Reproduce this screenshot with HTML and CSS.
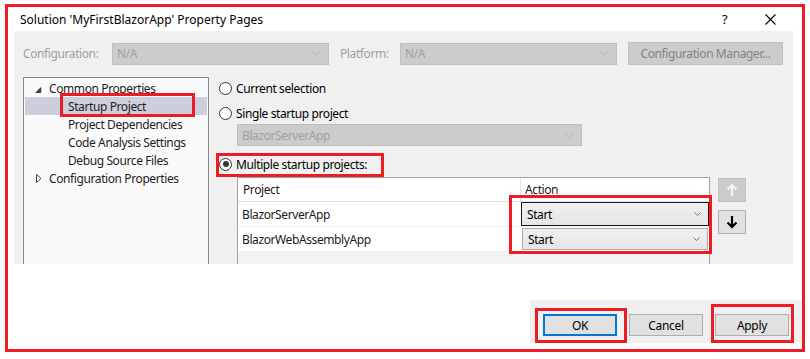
FILE: index.html
```html
<!DOCTYPE html>
<html>
<head>
<meta charset="utf-8">
<link rel="stylesheet" href="styles.css">
</head>
<body>
<div class="frame">
  <div class="titlebar">
    <span class="title">Solution 'MyFirstBlazorApp' Property Pages</span>
    <span class="help">?</span>
    <svg class="close" width="11" height="11" viewBox="0 0 11 11"><path d="M0.5 0.5L10.5 10.5M10.5 0.5L0.5 10.5" stroke="#000" stroke-width="1.1" fill="none"/></svg>
  </div>
  <div class="body">
    <div class="config-row">
      <span class="lbl lbl-config">Configuration:</span>
      <div class="combo disabled cfg">
        <span>N/A</span>
        <svg class="chev" width="9" height="5" viewBox="0 0 9 5"><path d="M0.5 0.5L4.5 4.5L8.5 0.5" stroke="#b0b0b0" fill="none"/></svg>
      </div>
      <span class="lbl lbl-platform">Platform:</span>
      <div class="combo disabled cfg">
        <span>N/A</span>
        <svg class="chev" width="9" height="5" viewBox="0 0 9 5"><path d="M0.5 0.5L4.5 4.5L8.5 0.5" stroke="#b0b0b0" fill="none"/></svg>
      </div>
      <div class="cm-btn">Configuration Manager...</div>
    </div>
    <div class="main">
      <div class="tree">
        <div class="node"><span class="tri">&#9698;</span><span>Common Properties</span></div>
        <div class="node child selected"><span>Startup Project</span></div>
        <div class="node child"><span>Project Dependencies</span></div>
        <div class="node child"><span>Code Analysis Settings</span></div>
        <div class="node child"><span>Debug Source Files</span></div>
        <div class="node"><svg class="tri-open" width="6" height="9" viewBox="0 0 6 9"><path d="M0.5 0.5L5 4.5L0.5 8.5Z" stroke="#444" fill="none"/></svg><span>Configuration Properties</span></div>
      </div>
      <div class="panel">
        <div class="radio-row r1"><span class="radio"></span><span>Current selection</span></div>
        <div class="radio-row r2"><span class="radio"></span><span>Single startup project</span></div>
        <div class="combo disabled single">
          <span>BlazorServerApp</span>
          <svg class="chev" width="9" height="5" viewBox="0 0 9 5"><path d="M0.5 0.5L4.5 4.5L8.5 0.5" stroke="#b0b0b0" fill="none"/></svg>
        </div>
        <div class="radio-row r3"><span class="radio checked"></span><span>Multiple startup projects:</span></div>
        <div class="grid-area">
          <div class="table">
            <div class="trow head"><div class="c1">Project</div><div class="c2">Action</div></div>
            <div class="trow"><div class="c1">BlazorServerApp</div><div class="c2"><div class="dd focus"><span>Start</span><svg class="chev" width="7" height="4" viewBox="0 0 7 4"><path d="M0.5 0.5L3.5 3.5L6.5 0.5" stroke="#707070" fill="none"/></svg></div></div></div>
            <div class="trow"><div class="c1">BlazorWebAssemblyApp</div><div class="c2"><div class="dd second"><span>Start</span><svg class="chev" width="7" height="4" viewBox="0 0 7 4"><path d="M0.5 0.5L3.5 3.5L6.5 0.5" stroke="#707070" fill="none"/></svg></div></div></div>
          </div>
          <div class="movers">
            <div class="mv up"><svg width="12" height="14" viewBox="0 0 12 14"><path d="M6 13V2M1.5 6.5L6 2L10.5 6.5" stroke="#f4f4f4" stroke-width="2.2" fill="none"/></svg></div>
            <div class="mv down"><svg width="12" height="14" viewBox="0 0 12 14"><path d="M6 1V12M1.5 7.5L6 12L10.5 7.5" stroke="#000" stroke-width="2.2" fill="none"/></svg></div>
          </div>
        </div>
      </div>
    </div>
  </div>
  <div class="footer">
    <div class="btn ok">OK</div>
    <div class="btn">Cancel</div>
    <div class="btn">Apply</div>
  </div>
  <div class="mark m-startup"></div>
  <div class="mark m-multi"></div>
  <div class="mark m-action"></div>
  <div class="mark m-ok"></div>
  <div class="mark m-apply"></div>
</div>
</body>
</html>
```

FILE: styles.css
```css
* { box-sizing: border-box; }
html, body { margin: 0; padding: 0; background: #fff; }
body {
  font-family: "Noto Sans", "Open Sans", sans-serif;
  font-size: 12px;
  color: #1a1a1a;
  width: 810px;
  height: 359px;
  overflow: hidden;
}
.frame {
  position: relative;
  margin: 4px 0 0 5px;
  width: 800px;
  height: 348px;
  border: 3px solid #ed1c24;
  background: #fff;
}
.titlebar {
  height: 24px;
  display: flex;
  align-items: center;
  padding-left: 12px;
}
.title { flex: 1; color: #000; }
.help { width: 8px; margin-right: 35px; color: #000; font-size: 13px; }
.close { margin-right: 26px; }

.body {
  margin-left: 6px;
  width: 779px;
  height: 233px;
  background: #f0f0f0;
  overflow: hidden;
  letter-spacing: -0.4px;
}
.config-row {
  display: flex;
  align-items: center;
  margin-top: 11px;
  height: 23px;
  padding-left: 9px;
}
.lbl { color: #a0a0a0; }
.lbl-config { width: 89px; }
.lbl-platform { width: 60px; margin-left: 11px; }
.combo {
  display: flex;
  align-items: center;
  justify-content: space-between;
  height: 22px;
  padding: 0 8px 0 4px;
  border: 1px solid #bfbfbf;
}
.combo.disabled { background: #cccccc; color: #a0a0a0; }
.cfg { width: 217px; }
.cm-btn {
  margin-left: 11px;
  width: 155px;
  height: 23px;
  border: 1px solid #bfbfbf;
  background: #cccccc;
  color: #838383;
  display: flex;
  align-items: center;
  justify-content: center;
}

.main {
  display: flex;
  margin-top: 12px;
  padding-left: 9px;
}
.tree {
  width: 186px;
  height: 220px;
  border: 1px solid #828790;
  background: #fafafa;
  padding-top: 1px;
  flex: none;
}
.node {
  height: 18px;
  display: flex;
  align-items: center;
  padding-left: 10px;
  color: #1e1e1e;
}
.tri { font-size: 8px; width: 15px; color: #404040; padding-left: 1px; }
.tri-open { margin-left: 2px; margin-right: 7px; }
.node.child { padding-left: 43px; margin: 0 1px; }
.node.selected { background: #cccedb; }

.panel {
  margin-left: 10px;
  display: flex;
  flex-direction: column;
}
.radio-row {
  display: flex;
  align-items: center;
  height: 20px;
  color: #000;
}
.r1 { margin-top: 1px; }
.r2 { margin-top: 5px; }
.r3 { margin-top: 8px; }
.radio {
  width: 13px;
  height: 13px;
  border: 1px solid #333;
  border-radius: 50%;
  background: #fff;
  margin-right: 4px;
  position: relative;
  flex: none;
}
.radio.checked::after {
  content: "";
  position: absolute;
  left: 2.5px;
  top: 2.5px;
  width: 6px;
  height: 6px;
  border-radius: 50%;
  background: #333;
}
.single {
  margin-left: 18px;
  margin-top: 1px;
  width: 345px;
  height: 22px;
}
.grid-area {
  display: flex;
  margin-left: 18px;
  margin-top: 3px;
}
.table {
  width: 473px;
  height: 120px;
  border: 1px solid #a0a0a0;
  border-bottom: none;
  background: #f4f4f4;
}
.trow {
  display: flex;
  height: 25px;
  background: #fff;
  border-bottom: 1px solid #eeeeee;
}
.trow.head { height: 24px; border-bottom: 1px solid #e0e0e0; }
.c1 {
  width: 283px;
  padding-left: 4px;
  display: flex;
  align-items: center;
}
.head .c1 { padding-left: 5px; border-right: 1px solid #e5e5e5; }
.c2 { flex: 1; display: flex; align-items: center; }
.head .c2 { padding-left: 4px; }
.dd {
  display: flex;
  align-items: center;
  justify-content: space-between;
  height: 24px;
  width: 100%;
  padding: 0 7px 0 5px;
  background: linear-gradient(#f0f0f0, #e5e5e5);
  color: #000;
}
.dd.focus { border: 1px solid #1a1a1a; }
.dd.second { border: 1px solid #acacac; height: 22px; margin: 0 1px; }
.movers {
  margin-left: 8px;
  display: flex;
  flex-direction: column;
  gap: 8px;
  padding-top: 1px;
}
.mv {
  width: 28px;
  height: 24px;
  display: flex;
  align-items: center;
  justify-content: center;
}
.mv.up { background: #cccccc; border: 1px solid #bfbfbf; }
.mv.down { background: #e1e1e1; border: 1px solid #adadad; }

.footer {
  margin-top: 36px;
  margin-left: 522px;
  width: 272px;
  height: 43px;
  background: #f0f0f0;
  display: flex;
  gap: 12px;
  padding: 14px 0 0 13px;
  letter-spacing: -0.3px;
}
.btn {
  width: 74px;
  height: 22px;
  border: 1px solid #adadad;
  background: #e1e1e1;
  color: #000;
  display: flex;
  align-items: center;
  justify-content: center;
}
.btn.ok { border: 2px solid #0078d7; }

.mark {
  position: absolute;
  border: 3px solid #ed1c24;
}
.m-startup { left: 52px; top: 86px; width: 135px; height: 24px; }
.m-multi { left: 208px; top: 146px; width: 168px; height: 24px; }
.m-action { left: 501px; top: 188px; width: 203px; height: 59px; }
.m-ok { left: 527px; top: 301px; width: 92px; height: 35px; }
.m-apply { left: 703px; top: 297px; width: 83px; height: 39px; }
```
